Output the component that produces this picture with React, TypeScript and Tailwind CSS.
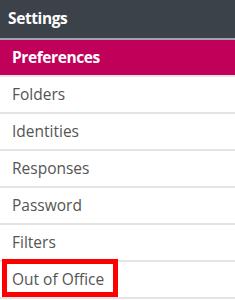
const items = ["Folders", "Identities", "Responses", "Password", "Filters"];

export default function App() {
  return (
    <div className="w-[235px] h-[300px] overflow-hidden bg-white font-['Open_Sans',sans-serif]">
      <div className="h-[40px] bg-[#3c4249] border-b-2 border-[#9ea5ad] pl-2 flex items-center text-white font-bold text-[15.5px] tracking-[-0.4px]">
        Settings
      </div>
      <div className="h-[37px] bg-[#c1005a] border-b-2 border-[#e4e4e4] pl-3 flex items-center text-white font-bold text-[15.5px] tracking-[-0.4px]">
        Preferences
      </div>
      {items.map((label) => (
        <div
          key={label}
          className="h-[37px] border-b-2 border-[#e4e4e4] pl-3 flex items-center text-[#555] text-[15.5px]"
        >
          {label}
        </div>
      ))}
      <div className="relative h-[37px] border-b-2 border-[#e4e4e4] pl-3 flex items-center text-[#555] text-[15.5px]">
        Out of Office
        <span className="absolute left-[2px] top-[-3px] w-[116px] h-[38px] border-[5px] border-[#ff0000]" />
      </div>
    </div>
  );
}
